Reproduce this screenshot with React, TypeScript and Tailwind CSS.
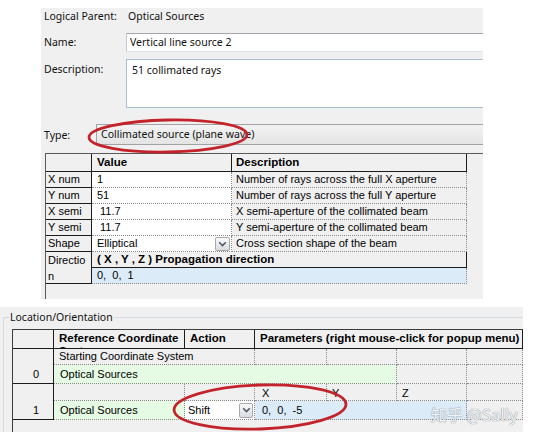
import React from 'react'

const ui = "font-['Noto_Sans',sans-serif] text-[10.5px] text-[#111]"
const solid = 'border-r border-b border-[#1c1c1c]'
const dotted = 'border-r border-b border-dotted border-[#8a8a8a]'

function DropButton({ className }: { className: string }) {
  return (
    <span className={`flex items-center justify-center border border-[#a9a9a9] rounded-[2px] bg-linear-to-b from-[#fafafa] to-[#d9dde2] ${className}`}>
      <svg width="9" height="6" viewBox="0 0 9 6">
        <path d="M1.2 1.3 L4.5 4.6 L7.8 1.3" stroke="#4a5866" strokeWidth="1.5" fill="none" />
      </svg>
    </span>
  )
}

const params = [
  { label: 'X num', value: '1', desc: 'Number of rays across the full X aperture' },
  { label: 'Y num', value: '51', desc: 'Number of rays across the full Y aperture' },
  { label: 'X semi', value: ' 11.7', desc: 'X semi-aperture of the collimated beam' },
  { label: 'Y semi', value: ' 11.7', desc: 'Y semi-aperture of the collimated beam' },
]

function SourceForm() {
  return (
    <div className="ml-[41px] mt-[8px] w-[442px] h-[291px] bg-[#f0f0f0] flex flex-col">
      {/* Logical parent */}
      <div className={`flex items-center h-[17px] pt-px pl-[3px] ${ui}`}>
        <span className="w-[84px]">Logical Parent:</span>
        <span>Optical Sources</span>
      </div>

      <div className={`flex items-center mt-[8px] h-[19px] ${ui}`}>
        <span className="w-[85px] pl-[3px]">Name:</span>
        <div className="flex-1 h-full bg-white border-t border-b border-l border-t-[#a3a6ad] border-b-[#dde3ea] border-l-[#c5cbd3] flex items-center pl-[3px]">
          Vertical line source 2
        </div>
      </div>

      <div className={`flex mt-[7px] h-[49px] ${ui}`}>
        <span className="w-[85px] pl-[3px] pt-[3px]">Description:</span>
        <div className="flex-1 h-full bg-white border-t border-b border-l border-[#a9bfd6] pl-[5px] pt-[3px]">
          51 collimated rays
        </div>
      </div>

      <div className={`flex items-center mt-[16px] h-[21px] ${ui}`}>
        <span className="w-[55px] pl-[3px] pt-[3px]">Type:</span>
        <div className="flex-1 h-full border-t border-b border-l border-[#a2a2a2] bg-linear-to-b from-[#f3f3f3] to-[#e4e4e4] flex items-center pl-[4px]">
          Collimated source (plane wave)
        </div>
      </div>

      {/* Parameter table */}
      <div className="ml-[4px] mt-[8px] flex-1 border-l border-t border-[#595959] font-['Liberation_Sans',Arial,sans-serif] text-[11px] text-black leading-none">
        <div className="flex h-[18px]">
          <div className={`w-[46px] ${solid}`} />
          <div className={`w-[140px] ${solid} pl-[5px] flex items-center font-bold text-[11.5px]`}>Value</div>
          <div className={`w-[235px] ${solid} pl-[4px] flex items-center font-bold text-[11.5px]`}>Description</div>
        </div>
        {params.map(p => (
          <div key={p.label} className="flex h-[16px]">
            <div className={`w-[46px] ${solid} pl-[2px] flex items-center`}>{p.label}</div>
            <div className={`w-[140px] ${dotted} bg-white pl-[5px] flex items-center whitespace-pre`}>{p.value}</div>
            <div className={`w-[235px] ${dotted} pl-[4px] flex items-center`}>{p.desc}</div>
          </div>
        ))}
        <div className="flex h-[16px]">
          <div className={`w-[46px] ${solid} pl-[2px] flex items-center`}>Shape</div>
          <div className={`w-[140px] ${dotted} bg-white pl-[5px] flex items-center`}>
            <span>Elliptical</span>
            <DropButton className="ml-auto mr-px w-[15px] h-[14px]" />
          </div>
          <div className={`w-[235px] ${dotted} pl-[4px] flex items-center`}>Cross section shape of the beam</div>
        </div>
        <div className="flex h-[32px]">
          <div className={`w-[46px] ${solid} pl-[2px] leading-[16px]`}>
            Directio<br />n
          </div>
          <div className="w-[375px] flex flex-col">
            <div className={`h-[16px] ${solid} pl-[5px] flex items-center font-bold text-[11.5px]`}>
              ( X , Y , Z ) Propagation direction
            </div>
            <div className={`h-[16px] ${dotted} bg-[#dcebf8] pl-[5px] flex items-center whitespace-pre`}>0,  0,  1</div>
          </div>
        </div>
      </div>
    </div>
  )
}

function LocationTable() {
  return (
    <div className="mt-[8px] w-[523px] h-[125px] bg-[#f0f0f0] pt-[10px] overflow-hidden">
      <div className="relative ml-[3px] h-full border-t border-l border-[#d3dbe2] pt-[11px]">
        <span className={`absolute left-[5px] -top-[8px] px-[1px] bg-[#f0f0f0] ${ui}`}>Location/Orientation</span>

        <div className="ml-[8px] h-full border-l border-t border-[#3c3c3c] font-['Liberation_Sans',Arial,sans-serif] text-[11px] text-black leading-none whitespace-nowrap">
          {/* header */}
          <div className="flex h-[19px] font-bold text-[11.5px]">
            <div className={`w-[41px] ${solid}`} />
            <div className={`w-[131px] ${solid} pl-[5px] pt-[2px] leading-[13px] whitespace-normal overflow-hidden`}>
              Reference Coordinate System
            </div>
            <div className={`w-[70px] ${solid} pl-[5px] flex items-center`}>Action</div>
            <div className={`flex-1 ${solid} pl-[5px] flex items-center overflow-hidden`}>
              Parameters (right mouse-click for popup menu)
            </div>
          </div>

          <div className="flex">
            {/* row numbers */}
            <div className="w-[41px] flex flex-col">
              <div className={`h-[35px] ${solid} flex items-end pl-[20px] pb-[3px]`}>0</div>
              <div className={`h-[36px] ${solid} flex items-end pl-[20px] pb-[3px]`}>1</div>
            </div>

            <div className="flex-1 flex flex-col">
              <div className="flex h-[16px]">
                <div className={`w-[201px] ${dotted} pl-[5px] flex items-center`}>Starting Coordinate System</div>
                <div className={`w-[72px] ${dotted}`} />
                <div className={`w-[70px] ${dotted}`} />
                <div className={`w-[70px] ${dotted}`} />
                <div className={`flex-1 ${dotted}`} />
              </div>
              <div className="flex h-[19px]">
                <div className={`w-[343px] ${dotted} bg-[#e6fbe4] pl-[6px] flex items-center`}>Optical Sources</div>
                <div className={`w-[70px] ${dotted}`} />
                <div className={`flex-1 ${dotted}`} />
              </div>
              <div className="flex h-[17px]">
                <div className={`w-[131px] ${dotted}`} />
                <div className={`w-[70px] ${dotted}`} />
                <div className={`w-[72px] ${dotted} pl-[7px] flex items-end pb-[1px]`}>X</div>
                <div className={`w-[70px] ${dotted} pl-[5px] flex items-end pb-[1px]`}>Y</div>
                <div className={`w-[70px] ${dotted} pl-[5px] flex items-end pb-[1px]`}>Z</div>
                <div className={`flex-1 ${dotted}`} />
              </div>
              <div className="flex h-[19px]">
                <div className={`w-[131px] ${dotted} bg-[#e6fbe4] pl-[6px] flex items-center`}>Optical Sources</div>
                <div className={`w-[70px] ${dotted} bg-white pl-[3px] flex items-center`}>
                  <span>Shift</span>
                  <DropButton className="ml-auto mr-px w-[14px] h-[15px]" />
                </div>
                <div className={`w-[212px] ${dotted} bg-[#dcebf8] pl-[7px] flex items-center whitespace-pre`}>0,  0,  -5</div>
                <div className={`flex-1 ${dotted}`} />
              </div>
            </div>
          </div>
        </div>
      </div>
    </div>
  )
}

export default function App() {
  return (
    <div className="relative w-[533px] h-[438px] bg-white overflow-hidden">
      <SourceForm />
      <LocationTable />

      {/* watermark */}
      <span className="absolute left-[431px] top-[404px] font-['Noto_Sans_CJK_SC','Noto_Sans',sans-serif] text-[16px] leading-[20px] text-[#f1f4f7] [text-shadow:0_0_1px_#8a929c,0_0_1px_#8a929c]">
        知乎 @Sally
      </span>

      {/* hand-drawn highlight rings */}
      <svg className="absolute inset-0 pointer-events-none" width="533" height="438">
        <ellipse cx="168" cy="136" rx="79" ry="16" fill="none" stroke="#c3242c" strokeWidth="2.8" transform="rotate(-1 168 136)" />
        <ellipse cx="260" cy="407" rx="86" ry="22" fill="none" stroke="#c3242c" strokeWidth="2.8" transform="rotate(-2 260 407)" />
      </svg>
    </div>
  )
}
